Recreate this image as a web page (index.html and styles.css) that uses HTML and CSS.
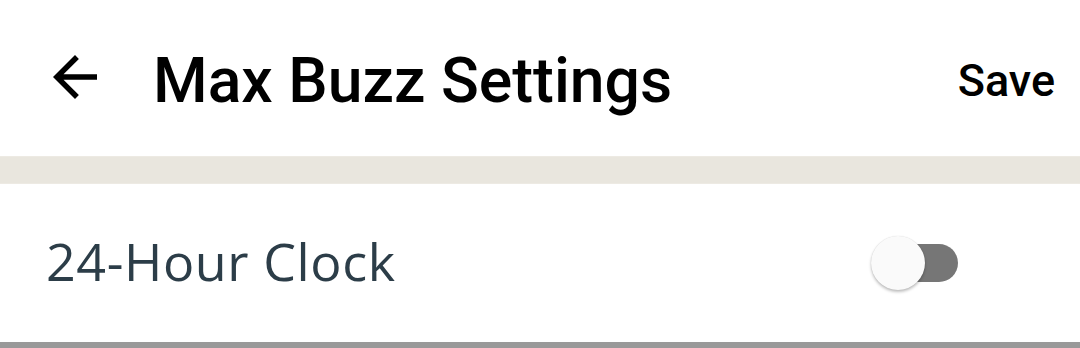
FILE: index.html
```html
<!DOCTYPE html>
<html>
<head>
<meta charset="utf-8">
<link rel="stylesheet" href="styles.css">
</head>
<body>
<div class="screen">
  <header class="toolbar">
    <div class="back">
      <svg viewBox="0 0 24 24" width="66" height="66"><path d="M20 11H7.83l5.59-5.59L12 4l-8 8 8 8 1.41-1.41L7.83 13H20v-2z" fill="#000"/></svg>
    </div>
    <h1 class="title">Max Buzz Settings</h1>
    <div class="save">Save</div>
  </header>
  <div class="band"></div>
  <div class="row">
    <span class="label">24-Hour Clock</span>
    <div class="switch">
      <div class="track"></div>
      <div class="thumb"></div>
    </div>
  </div>
</div>
</body>
</html>
```
FILE: styles.css
```css
html, body {
  margin: 0;
  padding: 0;
  background: #ffffff;
  overflow: hidden;
}
.screen {
  width: 1080px;
  height: 348px;
  display: flex;
  flex-direction: column;
}
.toolbar {
  height: 156px;
  display: flex;
  align-items: center;
  padding-left: 42px;
  padding-right: 25px;
  box-sizing: border-box;
  font-family: Roboto, "Liberation Sans", sans-serif;
}
.back {
  width: 66px;
  height: 66px;
  display: flex;
  margin-top: -2px;
}
.title {
  margin: 6px 0 0 45px;
  font-size: 62.5px;
  font-weight: 500;
  color: #000;
  flex: 1;
  line-height: 1;
}
.save {
  font-size: 45px;
  font-weight: 500;
  color: #000;
  line-height: 1;
  margin-top: 4px;
}
.band {
  height: 28px;
  background: #e9e6de;
  border-top: 1px solid #edeae3;
  border-bottom: 1px solid #edeae3;
  box-sizing: border-box;
}
.row {
  height: 158px;
  border-bottom: 6px solid #999999;
  display: flex;
  align-items: center;
  padding-left: 46px;
  padding-right: 122px;
  justify-content: space-between;
}
.label {
  font-family: "Open Sans", sans-serif;
  font-size: 52px;
  letter-spacing: 0.6px;
  color: #2c3d48;
  line-height: 1;
  margin-top: -4px;
}
.switch {
  position: relative;
  width: 87px;
  height: 54px;
}
.track {
  position: absolute;
  right: 0;
  top: 8px;
  width: 80px;
  height: 38px;
  border-radius: 19px;
  background: #767676;
}
.thumb {
  position: absolute;
  left: 0;
  top: 0;
  width: 54px;
  height: 54px;
  border-radius: 50%;
  background: #fafafa;
  box-shadow: 0 2px 3px rgba(0,0,0,0.25), 0 0 1px rgba(0,0,0,0.15);
}
```
